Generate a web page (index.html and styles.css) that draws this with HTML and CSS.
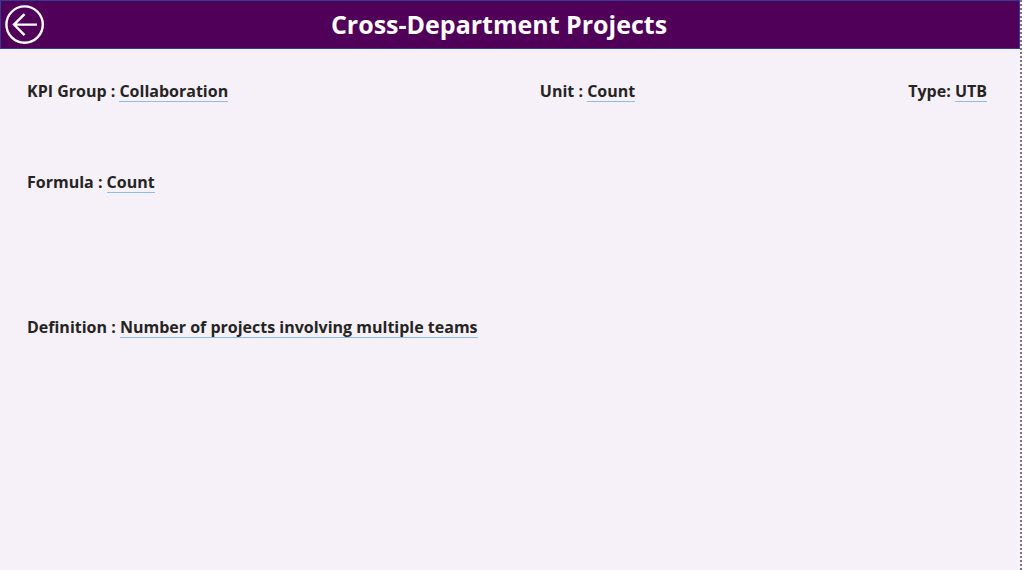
FILE: index.html
```html
<!DOCTYPE html>
<html lang="en">
<head>
<meta charset="utf-8">
<title>Cross-Department Projects</title>
<link rel="stylesheet" href="styles.css">
</head>
<body>
<div class="page">
  <header class="header">
    <button class="back" type="button" aria-label="Back">
      <svg viewBox="0 0 40 40" width="40" height="40" fill="none" stroke="#fff" stroke-width="2.4">
        <circle cx="19.6" cy="19.6" r="18.2"/>
        <path d="M32 19.6H9M19.5 9.1L9 19.6l10.500 10.500"/>
      </svg>
    </button>
    <h1 class="title">Cross-Department Projects</h1>
  </header>
  <main class="details">
    <div class="row">
      <p class="field">KPI Group : <span class="value">Collaboration</span></p>
      <p class="field">Unit : <span class="value">Count</span></p>
      <p class="field">Type: <span class="value">UTB</span></p>
    </div>
    <p class="field formula">Formula : <span class="value">Count</span></p>
    <p class="field">Definition : <span class="value">Number of projects involving multiple teams</span></p>
  </main>
</div>
</body>
</html>
```
FILE: styles.css
```css
* { box-sizing: border-box; }
body {
  margin: 0;
  background: #fff;
  color: #252423;
  font-family: "Segoe UI", "Open Sans", "Noto Sans", sans-serif;
}
.page {
  min-height: 100vh;
  margin-right: 2px;
  background: #f6f1f9;
  border-right: 2px dotted #777;
}
.header {
  display: grid;
  grid-template-columns: 48px 1fr 70px;
  align-items: center;
  height: 49px;
  background: #51005a;
  border: 1px solid #343c96;
}
.back {
  display: flex;
  padding: 0 4px;
  border: 0;
  background: none;
}
.title {
  margin: 0;
  padding-bottom: 2px;
  color: #fff;
  font-size: 25px;
  line-height: 32px;
  font-weight: 700;
  text-align: center;
}
.details { padding: 32px 33px 32px 27px; }
.row {
  display: grid;
  grid-template-columns: 511fr 367fr auto;
}
.field {
  margin: 0;
  font-size: 16px;
  line-height: 20px;
  font-weight: 700;
}
.value {
  display: inline-block;
  border-bottom: 1px solid #8fbce6;
}
.formula { margin: 70px 0 124px; }
```
